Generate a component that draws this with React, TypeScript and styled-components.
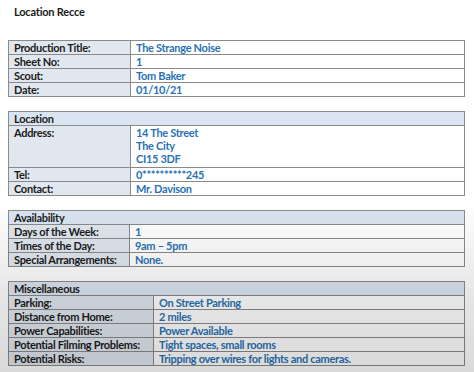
import React from 'react';
import styled, { createGlobalStyle } from 'styled-components';

const GlobalStyle = createGlobalStyle`
  html, body {
    margin: 0;
    padding: 0;
    background: #ffffff;
  }
  body {
    font-family: Lato, "Open Sans", "Liberation Sans", sans-serif;
    width: 474px;
    height: 372px;
    overflow: hidden;
  }
`

const Page = styled.div`
  position: relative;
  width: 474px;
  height: 372px;
  box-sizing: border-box;
  padding: 5px 9px 0 8px;
  display: flex;
  flex-direction: column;
  gap: 14px;

  /* the photo of the screen gets darker towards the bottom */
  &::after {
    content: '';
    position: absolute;
    inset: 0;
    pointer-events: none;
    background: linear-gradient(
      to bottom,
      rgba(0, 0, 0, 0) 0px,
      rgba(0, 0, 0, 0) 200px,
      rgba(0, 0, 0, 0.05) 250px,
      rgba(0, 0, 0, 0.1) 300px,
      rgba(0, 0, 0, 0.15) 372px
    );
  }
`

const Title = styled.h1`
  margin: 0 0 7px 6px;
  font-size: 11px;
  line-height: 14px;
  font-weight: 700;
  letter-spacing: -0.2px;
  color: #1b1b1b;
`

const Table = styled.table`
  width: 457px;
  border-collapse: collapse;
  table-layout: fixed;
  border: 1px solid #7d7d7d;
  font-size: 11px;
  font-weight: 700;
  letter-spacing: -0.3px;
`

const Row = styled.tr<{ $tall?: boolean }>`
  height: ${p => (p.$tall ? 42 : 14)}px;
`

const Cell = styled.td<{ $label?: boolean; $head?: boolean }>`
  box-sizing: border-box;
  padding: 0 4px 0 5px;
  border: 1px solid #8a8a8a;
  line-height: 13px;
  vertical-align: top;
  white-space: nowrap;
  color: ${p => (p.$label || p.$head ? '#1b1b1b' : '#2a72b5')};
  background: ${p => (p.$head ? '#dbe5f1' : p.$label ? '#e0e7ef' : '#ffffff')};
`

type Item = { label: string; value: React.ReactNode; tall?: boolean };

interface SectionProps {
  head?: string;
  labelWidth: number;
  items: Item[];
}

const Section: React.FC<SectionProps> = ({ head, labelWidth, items }) => (
  <Table>
    <colgroup>
      <col style={{ width: labelWidth }} />
      <col />
    </colgroup>
    <tbody>
      {head && (
        <Row>
          <Cell $head colSpan={2}>{head}</Cell>
        </Row>
      )}
      {items.map(it => (
        <Row key={it.label} $tall={it.tall}>
          <Cell $label>{it.label}</Cell>
          <Cell>{it.value}</Cell>
        </Row>
      ))}
    </tbody>
  </Table>
);

const App: React.FC = () => (
  <>
    <GlobalStyle />
    <Page>
      <Title>Location Recce</Title>
      <Section
        labelWidth={122}
        items={[
          { label: 'Production Title:', value: 'The Strange Noise' },
          { label: 'Sheet No:', value: '1' },
          { label: 'Scout:', value: 'Tom Baker' },
          { label: 'Date:', value: '01/10/21' },
        ]}
      />
      <Section
        head="Location"
        labelWidth={122}
        items={[
          {
            label: 'Address:',
            tall: true,
            value: (
              <>
                14 The Street<br />The City<br />CI15 3DF
              </>
            ),
          },
          { label: 'Tel:', value: '0**********245' },
          { label: 'Contact:', value: 'Mr. Davison' },
        ]}
      />
      <Section
        head="Availability"
        labelWidth={121}
        items={[
          { label: 'Days of the Week:', value: '1' },
          { label: 'Times of the Day:', value: '9am \u2013 5pm' },
          { label: 'Special Arrangements:', value: 'None.' },
        ]}
      />
      <Section
        head="Miscellaneous"
        labelWidth={145}
        items={[
          { label: 'Parking:', value: 'On Street Parking' },
          { label: 'Distance from Home:', value: '2 miles' },
          { label: 'Power Capabilities:', value: 'Power Available' },
          { label: 'Potential Filming Problems:', value: 'Tight spaces, small rooms' },
          { label: 'Potential Risks:', value: 'Tripping over wires for lights and cameras.' },
        ]}
      />
    </Page>
  </>
);

export default App;
